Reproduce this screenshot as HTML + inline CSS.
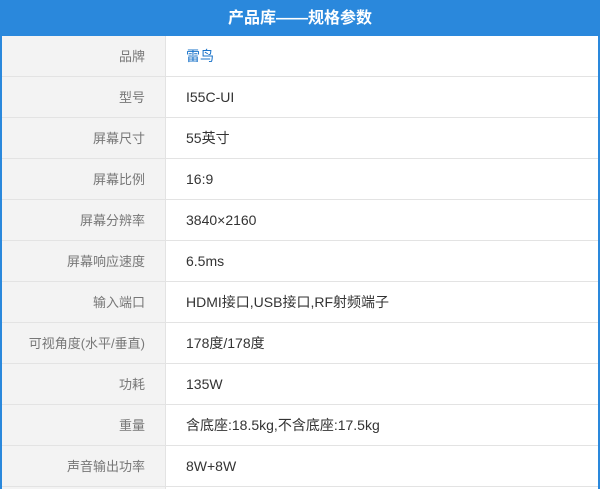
<!DOCTYPE html>
<html><head><meta charset="utf-8"><style>
html,body{margin:0;width:600px;height:489px;background:#fff;font-family:"Liberation Sans","Noto Sans CJK SC",sans-serif;overflow:hidden}
.w{position:absolute;left:0;top:0;width:596px;height:489px;box-sizing:border-box;width:600px;border-left:2px solid #2a88dc;border-right:2px solid #2a88dc;overflow:hidden;background:linear-gradient(to right,#f3f3f3 0,#f3f3f3 163px,#e3e3e3 163px,#e3e3e3 164px,#fff 164px)}
.h{height:36px;background:#2a88dc;color:#fff;font-weight:bold;font-size:16px;text-align:center;line-height:38px}
.r{height:40px;border-bottom:1px solid #e3e3e3;display:flex}
.l{width:143px;padding-right:20px;background:#f3f3f3;border-right:1px solid #e3e3e3;text-align:right;color:#777;font-size:13px;line-height:41px}
.v{padding-left:20px;font-size:14px;color:#333;line-height:41px}
</style></head><body><div class="w">
<div class="h">产品库——规格参数</div>
<div class="r"><div class="l">品牌</div><div class="v" style="color:#1a73c9">雷鸟</div></div>
<div class="r"><div class="l">型号</div><div class="v">I55C-UI</div></div>
<div class="r"><div class="l">屏幕尺寸</div><div class="v">55英寸</div></div>
<div class="r"><div class="l">屏幕比例</div><div class="v">16:9</div></div>
<div class="r"><div class="l">屏幕分辨率</div><div class="v">3840×2160</div></div>
<div class="r"><div class="l">屏幕响应速度</div><div class="v">6.5ms</div></div>
<div class="r"><div class="l">输入端口</div><div class="v">HDMI接口,USB接口,RF射频端子</div></div>
<div class="r"><div class="l">可视角度(水平/垂直)</div><div class="v">178度/178度</div></div>
<div class="r"><div class="l">功耗</div><div class="v">135W</div></div>
<div class="r"><div class="l">重量</div><div class="v">含底座:18.5kg,不含底座:17.5kg</div></div>
<div class="r"><div class="l">声音输出功率</div><div class="v">8W+8W</div></div>
</div></body></html>
